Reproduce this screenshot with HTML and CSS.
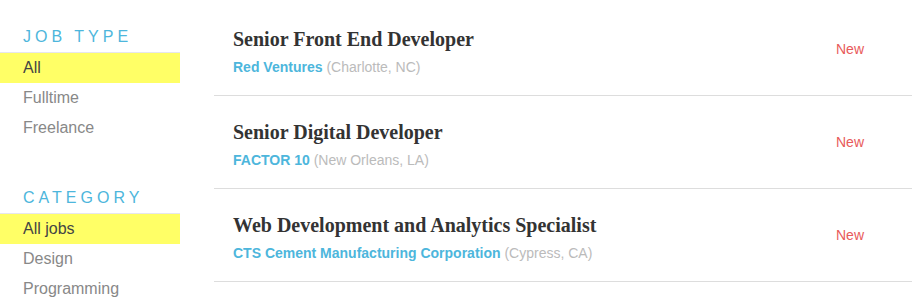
FILE: index.html
```html
<!DOCTYPE html>
<html>
<head>
<meta charset="utf-8">
<link rel="stylesheet" href="styles.css">
</head>
<body>
<div class="page">
  <aside class="sidebar">
    <section class="filter">
      <h3 class="filter-title">Job Type</h3>
      <ul class="filter-list">
        <li class="filter-item active">All</li>
        <li class="filter-item">Fulltime</li>
        <li class="filter-item">Freelance</li>
      </ul>
    </section>
    <section class="filter">
      <h3 class="filter-title">Category</h3>
      <ul class="filter-list">
        <li class="filter-item active">All jobs</li>
        <li class="filter-item">Design</li>
        <li class="filter-item">Programming</li>
      </ul>
    </section>
  </aside>
  <main class="jobs">
    <div class="job">
      <div class="job-info">
        <h2 class="job-title">Senior Front End Developer</h2>
        <div class="job-meta"><span class="company">Red Ventures</span> <span class="location">(Charlotte, NC)</span></div>
      </div>
      <span class="badge">New</span>
    </div>
    <div class="job">
      <div class="job-info">
        <h2 class="job-title">Senior Digital Developer</h2>
        <div class="job-meta"><span class="company">FACTOR 10</span> <span class="location">(New Orleans, LA)</span></div>
      </div>
      <span class="badge">New</span>
    </div>
    <div class="job">
      <div class="job-info">
        <h2 class="job-title">Web Development and Analytics Specialist</h2>
        <div class="job-meta"><span class="company">CTS Cement Manufacturing Corporation</span> <span class="location">(Cypress, CA)</span></div>
      </div>
      <span class="badge">New</span>
    </div>
  </main>
</div>
</body>
</html>
```
FILE: styles.css
```css
* { box-sizing: border-box; }
html, body { margin: 0; padding: 0; background: #fff; }
body { font-family: "Liberation Sans", Arial, sans-serif; }

.page {
  display: flex;
  gap: 34px;
  width: 912px;
}

.sidebar {
  width: 180px;
  flex: none;
  padding-top: 27px;
  display: flex;
  flex-direction: column;
  gap: 45px;
}

.filter-title {
  margin: 0 0 5px 0;
  padding-left: 23px;
  font-size: 16px;
  line-height: 20px;
  font-weight: normal;
  text-transform: uppercase;
  letter-spacing: 4px;
  color: #4db6dc;
}

.filter-list {
  list-style: none;
  margin: 0;
  padding: 0;
  border-top: 1px solid #e6e6ec;
}

.filter-item {
  padding-left: 23px;
  font-size: 16px;
  line-height: 30px;
  height: 30px;
  color: #888;
}

.filter-item.active {
  background: #ffff66;
  color: #444;
}

.jobs {
  flex: 1;
  padding-top: 3px;
}

.job {
  display: flex;
  align-items: flex-start;
  padding: 23px 48px 18px 19px;
  border-bottom: 1px solid #dddddd;
  height: 93px;
}

.job-info { flex: 1; }

.job-title {
  margin: 0;
  font-family: "Liberation Serif", "Times New Roman", serif;
  font-weight: bold;
  font-size: 20px;
  line-height: 26px;
  color: #333;
}

.job-meta {
  margin-top: 5px;
  font-size: 14px;
  line-height: 20px;
}

.company {
  font-weight: bold;
  color: #4db6dc;
}

.location { color: #bbb; }

.badge {
  margin-top: 13px;
  font-size: 14px;
  line-height: 20px;
  color: #e85a5a;
}
```
